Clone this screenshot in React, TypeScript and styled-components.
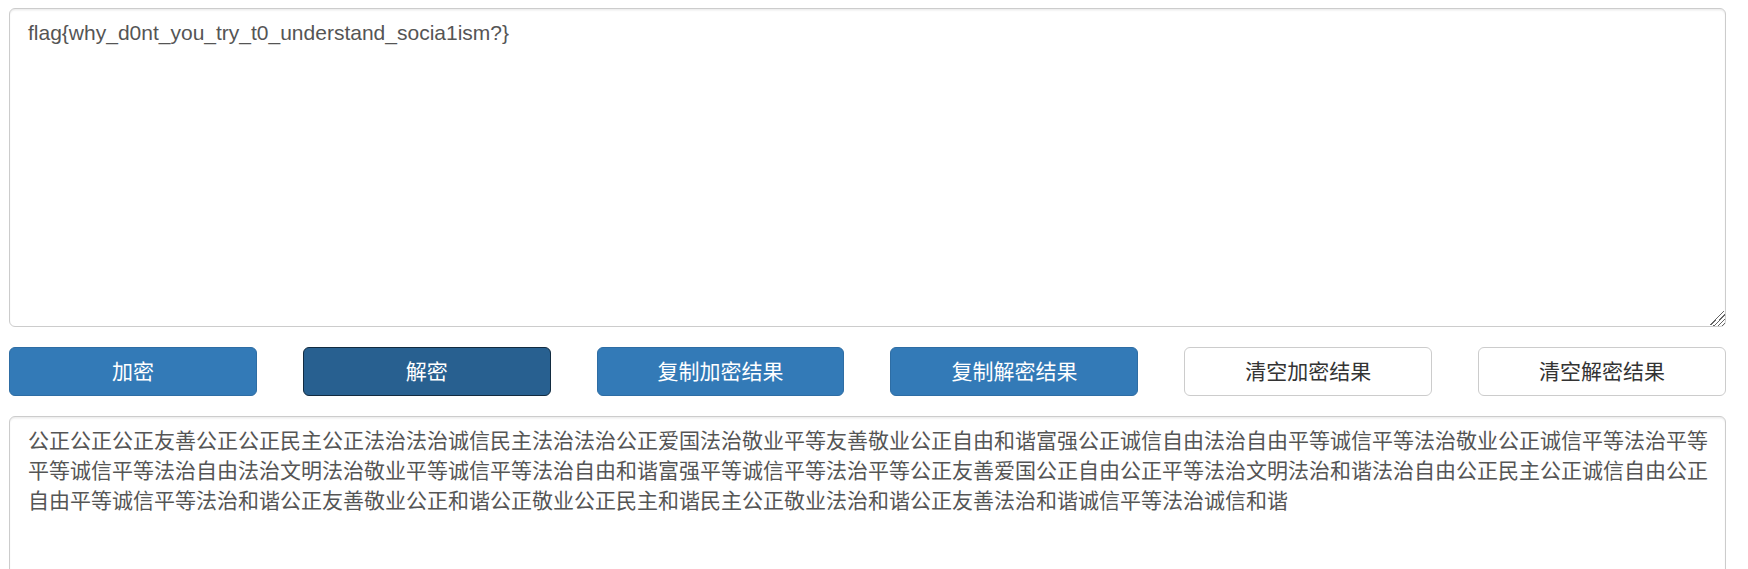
import React, { useState } from 'react';
import styled, { createGlobalStyle } from 'styled-components';

const GlobalStyle = createGlobalStyle`
  html, body {
    margin: 0;
    padding: 0;
    background: #fff;
  }
  body {
    font-family: "Liberation Sans", "Noto Sans CJK SC", sans-serif;
    color: #333;
  }
`;

const Page = styled.div`
  display: flex;
  flex-direction: column;
  gap: 20px;
  padding: 8px 22px 0 9px;
`;

const TextBox = styled.textarea`
  display: block;
  box-sizing: border-box;
  width: 100%;
  height: 319px;
  margin: 0;
  padding: 9px 16px 9px 18px;
  border: 1.5px solid #ccc;
  border-radius: 6px;
  box-shadow: inset 0 1.5px 1.5px rgba(0, 0, 0, 0.075);
  background: #fff;
  color: #555;
  font-family: "Liberation Sans", "Noto Sans CJK SC", sans-serif;
  font-size: 21px;
  line-height: 30px;
  outline: none;
  resize: both;

  &::-webkit-scrollbar {
    width: 22px;
    height: 22px;
  }

  &::-webkit-resizer {
    background: linear-gradient(
      135deg,
      transparent 0 46%,
      #666 46% 50%,
      transparent 50% 60%,
      #666 60% 64%,
      transparent 64% 74%,
      #666 74% 78%,
      transparent 78% 88%,
      #666 88% 92%,
      transparent 92%
    );
  }
`;

const ButtonRow = styled.div`
  display: grid;
  grid-template-columns: repeat(6, 1fr);
  column-gap: 46px;
`;

type Variant = 'primary' | 'pressed' | 'default';

const Button = styled.button<{ $variant: Variant }>`
  display: flex;
  align-items: center;
  justify-content: center;
  box-sizing: border-box;
  height: 49px;
  margin: 0;
  padding: 0 18px;
  border-radius: 6px;
  font-family: "Liberation Sans", "Noto Sans CJK SC", sans-serif;
  font-size: 21px;
  line-height: 30px;
  cursor: pointer;
  border: 1.5px solid
    ${(p) => (p.$variant === 'primary' ? '#2e6da4' : p.$variant === 'pressed' ? '#122b40' : '#ccc')};
  background: ${(p) => (p.$variant === 'primary' ? '#337ab7' : p.$variant === 'pressed' ? '#286090' : '#fff')};
  color: ${(p) => (p.$variant === 'default' ? '#333' : '#fff')};
`;

const plain = 'flag{why_d0nt_you_try_t0_understand_socia1ism?}';

const encoded =
  '公正公正公正友善公正公正民主公正法治法治诚信民主法治法治公正爱国法治敬业平等友善敬业公正自由和谐富强公正诚信自由法治自由平等诚信平等法治敬业公正诚信平等法治平等' +
  '平等诚信平等法治自由法治文明法治敬业平等诚信平等法治自由和谐富强平等诚信平等法治平等公正友善爱国公正自由公正平等法治文明法治和谐法治自由公正民主公正诚信自由公正' +
  '自由平等诚信平等法治和谐公正友善敬业公正和谐公正敬业公正民主和谐民主公正敬业法治和谐公正友善法治和谐诚信平等法治诚信和谐';

const buttons: { label: string; variant: Variant }[] = [
  { label: '加密', variant: 'primary' },
  { label: '解密', variant: 'pressed' },
  { label: '复制加密结果', variant: 'primary' },
  { label: '复制解密结果', variant: 'primary' },
  { label: '清空加密结果', variant: 'default' },
  { label: '清空解密结果', variant: 'default' },
];

const App: React.FC = () => {
  const [input, setInput] = useState(plain);
  const [output, setOutput] = useState(encoded);

  return (
    <>
      <GlobalStyle />
      <Page>
        <TextBox value={input} onChange={(e) => setInput(e.target.value)} spellCheck={false} />
        <ButtonRow>
          {buttons.map((b) => (
            <Button key={b.label} $variant={b.variant} type="button">
              {b.label}
            </Button>
          ))}
        </ButtonRow>
        <TextBox value={output} onChange={(e) => setOutput(e.target.value)} spellCheck={false} />
      </Page>
    </>
  );
};

export default App;
